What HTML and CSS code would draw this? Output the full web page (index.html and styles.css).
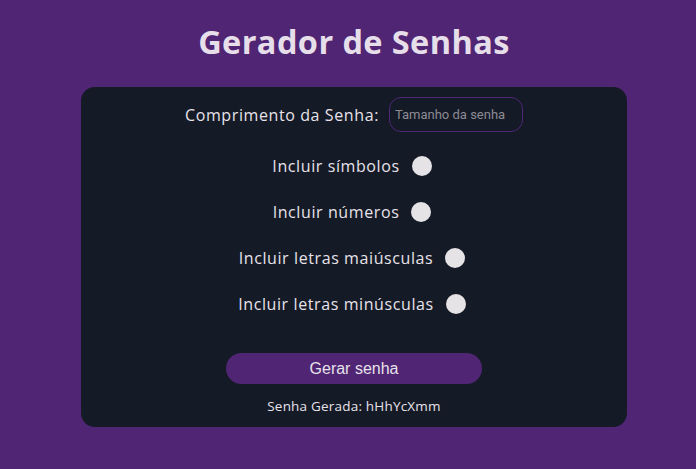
FILE: index.html
```html
<!DOCTYPE html>
<html lang="pt-BR">
<head>
<meta charset="utf-8">
<title>Gerador de Senhas</title>
<link rel="stylesheet" href="styles.css">
</head>
<body>
<main class="page">
  <h1 class="title">Gerador de Senhas</h1>
  <section class="card">
    <div class="length-row">
      <label class="label" for="len">Comprimento da Senha:</label>
      <input class="length-input" id="len" type="text" placeholder="Tamanho da senha">
    </div>
    <div class="option"><span class="label">Incluir símbolos</span><span class="dot"></span></div>
    <div class="option"><span class="label">Incluir números</span><span class="dot"></span></div>
    <div class="option"><span class="label">Incluir letras maiúsculas</span><span class="dot"></span></div>
    <div class="option"><span class="label">Incluir letras minúsculas</span><span class="dot"></span></div>
    <button class="generate">Gerar senha</button>
    <p class="result">Senha Gerada: hHhYcXmm</p>
  </section>
</main>
</body>
</html>
```
FILE: styles.css
```css
* { box-sizing: border-box; }
html, body { margin: 0; height: 100%; }
body {
  background: #4f2574;
  font-family: "Open Sans", "DejaVu Sans", sans-serif;
  color: #e6e0e8;
}
.page {
  display: flex;
  flex-direction: column;
  align-items: center;
  padding-left: 12px;
}
.title {
  margin: 22px 0 0;
  height: 43px;
  font-size: 32.5px;
  font-weight: 700;
  letter-spacing: 0.4px;
  color: #e6dee9;
  line-height: 40px;
}
.card {
  margin-top: 22px;
  width: 546px;
  height: 340px;
  background: #141a26;
  border-radius: 14px;
  padding: 10px 0 0;
  display: flex;
  flex-direction: column;
  align-items: center;
}
.label {
  font-size: 16px;
  letter-spacing: 0.6px;
  color: #e8e2ea;
}
.length-row {
  display: flex;
  align-items: center;
  gap: 10px;
  height: 35px;
}
.length-input {
  width: 134px;
  height: 35px;
  border: 1px solid #4f2574;
  border-radius: 12px;
  background: #141a26;
  padding: 0 5px;
  font-family: Roboto, sans-serif;
  font-size: 13px;
  color: #e6e0e8;
  outline: none;
}
.length-input::placeholder { color: #8d8b94; }
.option {
  display: flex;
  align-items: center;
  gap: 12px;
  height: 20px;
  margin-top: 26px;
}
.length-row + .option { margin-top: 24px; }
.dot {
  width: 20px;
  height: 20px;
  margin-right: 4px;
  border-radius: 50%;
  background: #e6e3e6;
}
.generate {
  margin-top: 39px;
  width: 256px;
  height: 31px;
  border: none;
  border-radius: 16px;
  background: #4f2574;
  color: #e8e2ea;
  font-family: "Liberation Sans", Arial, sans-serif;
  font-size: 16px;
}
.result {
  margin: 13px 0 0;
  font-size: 13.5px;
  letter-spacing: 0.2px;
  color: #e8e2ea;
}
```
